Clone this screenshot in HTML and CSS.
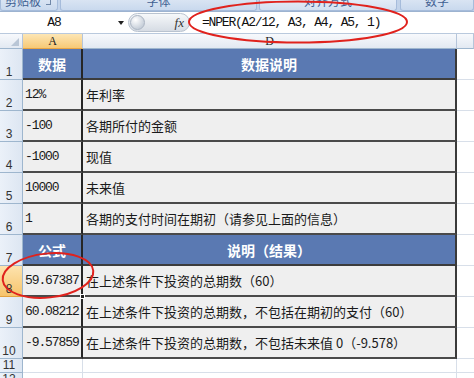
FILE: index.html
```html
<!DOCTYPE html>
<html lang="zh-CN">
<head>
    <meta charset="UTF-8">
    <title>NPER 函数示例</title>
    <link rel="stylesheet" href="styles.css">
</head>
<body>
    <div class="window">
        <div class="ribbon">
            <div class="group g-clip"><span>剪贴板</span><i class="launcher"></i></div>
            <div class="group g-font"><span>字体</span></div>
            <div class="group g-align"><span>对齐方式</span></div>
            <div class="group g-num"><span>数字</span></div>
        </div>

        <div class="formula-bar">
            <div class="name-box">A8</div>
            <div class="name-arrow"></div>
            <div class="fx-pill"><span class="knob"></span><span class="fx">fx</span></div>
            <div class="formula">=NPER(A2/12, A3, A4, A5, 1)</div>
        </div>

        <div class="sheet">
            <div class="ch corner"><i class="corner-tri"></i></div>
            <div class="ch sel">A</div>
            <div class="ch">D</div>
            <div class="ch"></div>

            <div class="rh">1</div>
            <div class="hd c-a">数据</div>
            <div class="hd c-d">数据说明</div>
            <div class="blank"></div>

            <div class="rh">2</div>
            <div class="cell c-a num">12%</div>
            <div class="cell c-d txt">年利率</div>
            <div class="blank"></div>

            <div class="rh">3</div>
            <div class="cell c-a num">-100</div>
            <div class="cell c-d txt">各期所付的金额</div>
            <div class="blank"></div>

            <div class="rh">4</div>
            <div class="cell c-a num">-1000</div>
            <div class="cell c-d txt">现值</div>
            <div class="blank"></div>

            <div class="rh">5</div>
            <div class="cell c-a num">10000</div>
            <div class="cell c-d txt">未来值</div>
            <div class="blank"></div>

            <div class="rh">6</div>
            <div class="cell c-a num">1</div>
            <div class="cell c-d txt">各期的支付时间在期初（请参见上面的信息）</div>
            <div class="blank"></div>

            <div class="rh">7</div>
            <div class="hd c-a">公式</div>
            <div class="hd c-d">说明（结果）</div>
            <div class="blank"></div>

            <div class="rh sel">8</div>
            <div class="cell c-a num active">59.67387<i class="fill-handle"></i></div>
            <div class="cell c-d txt">在上述条件下投资的总期数（60）</div>
            <div class="blank"></div>

            <div class="rh">9</div>
            <div class="cell c-a num">60.08212</div>
            <div class="cell c-d txt">在上述条件下投资的总期数，不包括在期初的支付（60）</div>
            <div class="blank"></div>

            <div class="rh">10</div>
            <div class="cell c-a num">-9.57859</div>
            <div class="cell c-d txt">在上述条件下投资的总期数，不包括未来值 0（-9.578）</div>
            <div class="blank"></div>

            <div class="rh">11</div>
            <div class="empty"></div>
            <div class="empty"></div>
            <div class="blank"></div>

            <div class="rh">12</div>
            <div class="empty"></div>
            <div class="empty"></div>
            <div class="blank"></div>
        </div>

        <svg class="marks" width="474" height="378" viewBox="0 0 474 378">
            <ellipse cx="298" cy="22" rx="109" ry="20.5" fill="none" stroke="#e0221d" stroke-width="2"/>
            <ellipse cx="48" cy="275.5" rx="45.5" ry="22" fill="none" stroke="#e0221d" stroke-width="2" transform="rotate(-6 48 275.5)"/>
        </svg>
    </div>
</body>
</html>
```

FILE: styles.css
```css
* { box-sizing: border-box; margin: 0; padding: 0; }
body { font-family: "Noto Sans CJK SC", sans-serif; background: #fff; }
.window { position: relative; width: 474px; height: 378px; overflow: hidden; background: #fff; }

/* ribbon (cut off at the top) */
.ribbon {
    display: flex;
    gap: 2px;
    height: 11px;
    background: #c2d3ea;
    overflow: hidden;
}
.group {
    position: relative;
    height: 11px;
    background: linear-gradient(#d9e4f3, #c9d9ee);
    border: 1px solid #a6bcdb;
    border-top: none;
    border-radius: 0 0 3px 3px;
    color: #3f5f92;
    font-size: 12px;
    text-align: center;
}
.group span { display: block; line-height: 12px; margin-top: -5px; }
.g-clip { width: 58px; text-align: left; padding-left: 4px; }
.g-font { width: 197px; }
.g-align { width: 138px; background: linear-gradient(#e4ecf7, #d3e0f1); }
.g-num { flex: 1; margin-left: 1px; }
.launcher {
    position: absolute;
    right: 6px;
    top: 0;
    width: 5px;
    height: 5px;
    border-right: 1px solid #6f87a8;
    border-bottom: 1px solid #6f87a8;
}

/* formula bar */
.formula-bar {
    display: flex;
    align-items: center;
    height: 23px;
    background: #fff;
    border-top: 1px solid #9db3d0;
    border-bottom: 1px solid #b9c9dd;
    font-family: "Liberation Mono", "Noto Sans CJK SC", monospace;
    font-size: 13px;
    color: #111;
}
.name-box { width: 108px; text-align: center; letter-spacing: -1px; }
.name-arrow {
    width: 0;
    height: 0;
    margin-left: 10px;
    border-left: 3px solid transparent;
    border-right: 3px solid transparent;
    border-top: 4px solid #222;
}
.fx-pill {
    display: flex;
    align-items: center;
    width: 62px;
    height: 19px;
    margin-left: 4px;
    border: 1px solid #b9c3d0;
    border-radius: 10px;
    background: linear-gradient(#f6f8fa, #d6dce4);
}
.knob {
    width: 15px;
    height: 15px;
    margin-left: 1px;
    border-radius: 50%;
    border: 1px solid #aab4c2;
    background: radial-gradient(circle at 35% 30%, #ffffff, #c9d1db 70%);
}
.fx {
    margin-left: auto;
    margin-right: 5px;
    font-family: "Liberation Serif", serif;
    font-style: italic;
    font-size: 13px;
    color: #333;
}
.formula { padding-left: 12px; letter-spacing: -1.2px; white-space: pre; }

/* sheet */
.sheet {
    display: grid;
    grid-template-columns: 23px 60px 374px 17px;
    grid-template-rows: 15px repeat(10, 31px) 14px 14px;
}
.ch {
    background: linear-gradient(#f7f9fc, #e2e9f2);
    border-right: 1px solid #b5c5da;
    border-bottom: 1px solid #9eb6ce;
    font-family: "Liberation Serif", serif;
    font-size: 12px;
    line-height: 14px;
    text-align: center;
    color: #222;
}
.ch.sel { background: linear-gradient(#fde6b5, #f7c976); border-bottom-color: #eaa644; }
.corner { position: relative; }
.corner-tri {
    position: absolute;
    right: 3px;
    bottom: 2px;
    width: 0;
    height: 0;
    border-left: 8px solid transparent;
    border-bottom: 8px solid #b9c6d6;
}
.rh {
    display: flex;
    align-items: flex-end;
    justify-content: center;
    padding-right: 4px;
    background: linear-gradient(to right, #ebf1f9, #dde6f2);
    border-right: 1px solid #9eb6ce;
    border-bottom: 1px solid #9eb6ce;
    font-family: "Liberation Sans", sans-serif;
    font-size: 12px;
    line-height: 14px;
    color: #333;
}
.rh.sel { background: linear-gradient(#fde3ae, #f6c46c); border-bottom-color: #e3a13f; }

.hd {
    display: flex;
    align-items: center;
    justify-content: center;
    background: #5a79b2;
    color: #fff;
    font-weight: bold;
    font-size: 14px;
    border-bottom: 2px solid #3c3c3c;
}
.cell {
    display: flex;
    align-items: center;
    background: #efefef;
    border-bottom: 2px solid #4a4a4a;
    font-size: 13px;
    color: #1a1a1a;
    white-space: nowrap;
}
.c-a { border-right: 2px solid #262626; }
.c-d { border-right: 2px solid #3a3a3a; }
.num {
    padding-left: 2px;
    font-family: "Liberation Mono", monospace;
    letter-spacing: -1.1px;
}
.txt { padding-left: 3px; }
.active { position: relative; }
.fill-handle {
    position: absolute;
    right: -4px;
    bottom: -4px;
    width: 5px;
    height: 5px;
    background: #222;
    border: 1px solid #fff;
}
.blank { background: #fff; border-bottom: 1px solid #d8dfe9; }
.empty { background: #fff; border-right: 1px solid #d8dfe9; border-bottom: 1px solid #d8dfe9; }

.marks { position: absolute; top: 0; left: 0; pointer-events: none; }
```
